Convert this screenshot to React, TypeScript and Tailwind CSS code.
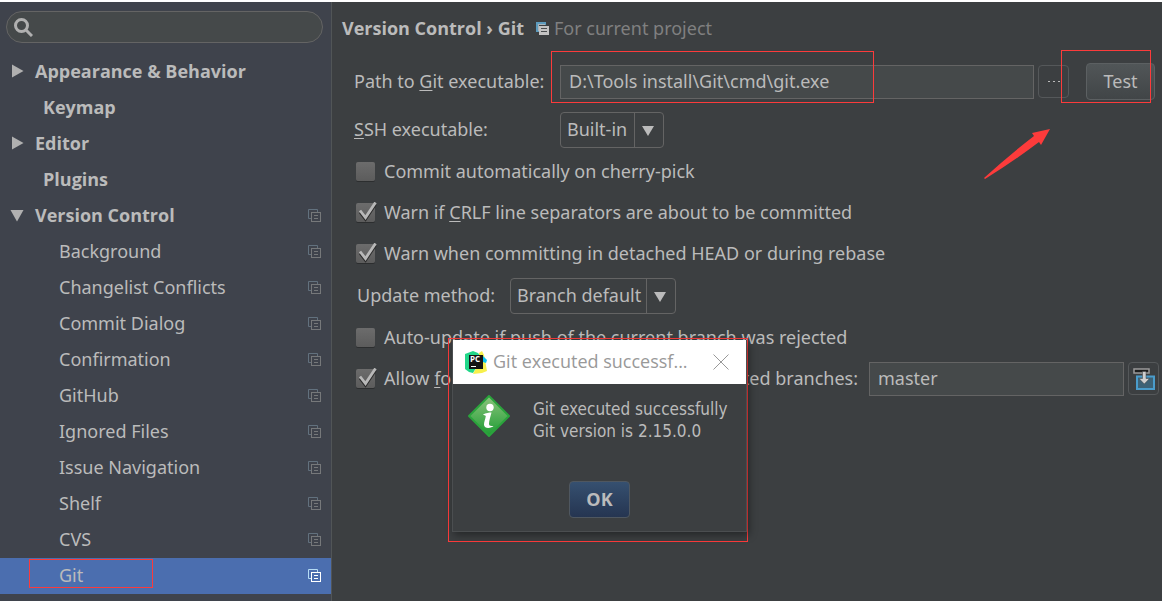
import { useState, type ReactNode } from "react";

type TreeItem = {
  label: string;
  level: "root" | "leafRoot" | "child";
  state?: "open" | "closed";
  project?: boolean;
};

const ITEMS: TreeItem[] = [
  { label: "Appearance & Behavior", level: "root", state: "closed" },
  { label: "Keymap", level: "leafRoot" },
  { label: "Editor", level: "root", state: "closed" },
  { label: "Plugins", level: "leafRoot" },
  { label: "Version Control", level: "root", state: "open", project: true },
  { label: "Background", level: "child", project: true },
  { label: "Changelist Conflicts", level: "child", project: true },
  { label: "Commit Dialog", level: "child", project: true },
  { label: "Confirmation", level: "child", project: true },
  { label: "GitHub", level: "child", project: true },
  { label: "Ignored Files", level: "child", project: true },
  { label: "Issue Navigation", level: "child", project: true },
  { label: "Shelf", level: "child", project: true },
  { label: "CVS", level: "child", project: true },
  { label: "Git", level: "child", project: true },
];

const INDENT = {
  root: "pl-[35px] font-['Open_Sans',sans-serif] font-bold",
  leafRoot: "pl-[43px] font-['Open_Sans',sans-serif] font-bold",
  child: "pl-[59px]",
};

function ProjectIcon({ active }: { active: boolean }) {
  const back = active ? "#b5dcf5" : "#62717e";
  const front = active ? "#ffffff" : "#76787a";
  return (
    <svg width="13" height="13" viewBox="0 0 13 13" fill="none" className="shrink-0" aria-hidden="true">
      <path d="M3 9.5H.5V.5h9V3" stroke={back} />
      <rect x="3.5" y="3.5" width="9" height="9" stroke={front} />
      <path d="M6 6.5h4M6 9.5h4" stroke={front} />
    </svg>
  );
}

function TreeRow({ item, active, onSelect }: { item: TreeItem; active: boolean; onSelect: () => void }) {
  return (
    <li className="relative">
      <button
        onClick={onSelect}
        className={`flex h-9 w-full items-center pb-0.5 pr-[10px] text-left ${INDENT[item.level]} ${active ? "bg-[#4b6eaf]" : ""}`}
      >
        <span className="flex-1">{item.label}</span>
        {item.project && <ProjectIcon active={active} />}
      </button>
      {item.state && (
        <svg width="14" height="14" viewBox="0 0 14 14" className="absolute left-[10px] top-[10px]" aria-hidden="true">
          <path d={item.state === "open" ? "M0.500 2h13L7 13.500z" : "M2 .5v13L13.500 7z"} fill="#b0b0b0" />
        </svg>
      )}
      {active && <span className="pointer-events-none absolute left-[29px] top-px h-[29px] w-[124px] border border-[#fc3b3b]" />}
    </li>
  );
}

function Check({ id, defaultChecked, children }: { id: string; defaultChecked?: boolean; children: ReactNode }) {
  return (
    <div className="flex h-[41px] items-center gap-[9px]">
      <span className="relative h-[19px] w-[19px] shrink-0">
        <input
          id={id}
          type="checkbox"
          defaultChecked={defaultChecked}
          className="peer block h-[19px] w-[19px] appearance-none rounded-[2px] bg-gradient-to-b from-[#6c6c6c] to-[#5c5c5c] shadow-[0_1px_0_#2c2e2f]"
        />
        <svg
          width="20"
          height="20"
          viewBox="0 0 20 20"
          fill="none"
          className="pointer-events-none absolute left-px -top-px hidden peer-checked:block"
          aria-hidden="true"
        >
          <path d="M3 10.500L8.500 17.500L18.500 2.500" stroke="#2b2b2b" strokeWidth="2.500" />
          <path d="M3 8.500L8.500 15.500L18.500 .5" stroke="#b8b8b8" strokeWidth="2.800" />
        </svg>
      </span>
      <label htmlFor={id} className="flex flex-1 justify-between whitespace-pre pb-0.5">
        {children}
      </label>
    </div>
  );
}

function Combo({ id, options, className }: { id: string; options: string[]; className: string }) {
  return (
    <div className={`relative h-9 rounded border border-[#646464] ${className}`}>
      <select id={id} className="h-full w-full appearance-none bg-transparent pb-0.5 pl-[6px] outline-none">
        {options.map((o) => (
          <option key={o}>{o}</option>
        ))}
      </select>
      <span className="pointer-events-none absolute inset-y-0 right-0 flex w-[29px] items-center justify-center border-l border-[#646464]">
        <svg width="12" height="11" viewBox="0 0 12 11" className="-ml-0.5" aria-hidden="true">
          <path d="M0 1h12L6 11z" fill="#bbbbbb" />
        </svg>
      </span>
    </div>
  );
}

function SuccessDialog({ onClose }: { onClose: () => void }) {
  return (
    <div className="absolute left-[116px] top-[336px] border border-[#fc3b3b] pb-[9px] pl-[3px] pt-px">
      <div
        role="dialog"
        aria-labelledby="dialog-title"
        className="w-[295px] border border-t-0 border-[#4b4e50] bg-[#3c3f41] shadow-[2px_3px_8px_rgba(0,0,0,0.4)]"
      >
        <div className="flex h-11 items-center bg-white pl-3 pr-[17px] text-[#999999]">
          <svg width="23" height="23" viewBox="0 0 23 23" className="shrink-0" aria-hidden="true">
            <path d="M14 2l3-2 2 4 1 5 2 11-5 2-9 1 3-6z" fill="#f7f04c" />
            <path d="M0 3L8 0l5 2 3 4-5 11-3 5-4-1-4-3z" fill="#21d789" />
            <path d="M18 5l4 4-1 3-3-1z" fill="#07c3f2" />
            <rect x="4" y="4" width="14" height="14" fill="#141414" />
            <text x="5" y="11" fontSize="8" fontWeight="bold" fill="#fff" fontFamily="Open Sans, sans-serif">
              PC
            </text>
            <path d="M6 15.500h5" stroke="#fff" />
          </svg>
          <h2 id="dialog-title" className="ml-[5px] flex-1 whitespace-nowrap pb-0.5 font-['Open_Sans',sans-serif]">
            Git executed successf...
          </h2>
          <button onClick={onClose} aria-label="Close">
            <svg width="16" height="16" viewBox="0 0 16 16" stroke="#999999" aria-hidden="true">
              <path d="M.5.5l15 15M15.500.5l-15 15" />
            </svg>
          </button>
        </div>
        <div className="flex gap-[23px] pl-[15px] pt-[11px]">
          <svg width="42" height="42" viewBox="0 0 42 42" className="shrink-0" aria-hidden="true">
            <defs>
              <linearGradient id="info" x1="0" y1="0" x2="0" y2="1">
                <stop offset="0" stopColor="#8cc47c" />
                <stop offset="1" stopColor="#1d9c33" />
              </linearGradient>
            </defs>
            <path d="M21 1L41 21 21 41 1 21z" fill="url(#info)" stroke="#2aa33c" strokeWidth="2" strokeLinejoin="round" />
            <circle cx="22" cy="12.500" r="3.700" fill="#fff" />
            <path d="M15 19.500c3-1.500 6-2 8.500-2-1 4-2.500 8-2.500 11.500 0 2 2 2 4.500 2-1.500 2-9 3.500-9.500-1-.2-3 1.500-6 1.800-9-.8-.7-1.800-.7-2.800-1.500z" fill="#fff" />
          </svg>
          <p className="pt-[3px] font-['DejaVu_Sans_Condensed','DejaVu_Sans',sans-serif] text-[17px] leading-[22px]">
            Git executed successfully
            <br />
            Git version is 2.15.0.0
          </p>
        </div>
        <div className="flex justify-center pb-[13px] pt-[39px]">
          <button
            onClick={onClose}
            className="h-[37px] w-[61px] rounded border border-[#4f5760] bg-gradient-to-b from-[#365070] to-[#253551] pb-0.5 font-['Open_Sans',sans-serif] font-bold"
          >
            OK
          </button>
        </div>
      </div>
    </div>
  );
}

export default function App() {
  const [selected, setSelected] = useState("Git");
  const [path, setPath] = useState("D:\\Tools install\\Git\\cmd\\git.exe");
  const [branches, setBranches] = useState("master");
  const [showResult, setShowResult] = useState(true);

  return (
    <div className="flex min-h-screen border-t-2 border-white bg-[#3c3f41] font-['Noto_Sans','Open_Sans',sans-serif] text-[18px] leading-6 text-[#bbbbbb]">
      <aside className="w-[332px] shrink-0 border-r border-[#515557] bg-[#3f434c]">
        <div className="pl-[6px] pr-2 pt-[9px]">
          <div className="flex h-8 items-center rounded-full border border-[#646464] bg-[#45494a] pl-[7px]">
            <svg width="19" height="19" viewBox="0 0 19 19" fill="none" stroke="#b0b0b0" aria-hidden="true">
              <circle cx="7.500" cy="7.500" r="6" strokeWidth="3" />
              <path d="M12 12l6 6" strokeWidth="3" />
            </svg>
            <input type="search" aria-label="Search settings" className="min-w-0 flex-1 bg-transparent px-2 outline-none" />
          </div>
        </div>
        <ul className="pt-[11px]">
          {ITEMS.map((item) => (
            <TreeRow
              key={item.label}
              item={item}
              active={selected === item.label}
              onSelect={() => setSelected(item.label)}
            />
          ))}
        </ul>
      </aside>

      <main className="relative min-w-0 flex-1">
        <header className="flex h-[61px] items-center pb-[9px] pl-[10px]">
          <h1 className="font-['Open_Sans',sans-serif] font-bold">Version Control › Git</h1>
          <svg width="13" height="13" viewBox="0 0 13 13" className="ml-3 mr-[5px]" aria-hidden="true">
            <path d="M0 0h10v3H3v7H0z" fill="#5d9bbd" />
            <path d="M2 2h7v1H3v6H2z" fill="#aab4ba" />
            <rect x="3" y="4" width="10" height="9" fill="#c3c3c3" />
            <path d="M5 6.500h6M5 9.500h6" stroke="#4a4d4f" />
          </svg>
          <span className="text-[#808080]">For current project</span>
        </header>

        <div className="relative flex items-center pl-[22px] pr-[7px]">
          <label htmlFor="git-path" className="w-[206px] shrink-0 whitespace-nowrap pb-0.5">
            Path to <u className="underline-offset-2">G</u>it executable:
          </label>
          <input
            id="git-path"
            value={path}
            onChange={(e) => setPath(e.target.value)}
            className="h-[34px] min-w-0 flex-1 border border-[#646464] bg-[#45494a] px-2 pb-0.5 outline-none"
          />
          <button
            aria-label="Browse"
            className="ml-1 flex h-[33px] w-[31px] shrink-0 items-center justify-center rounded border border-[#55585a]"
          >
            <svg width="12" height="2" viewBox="0 0 12 2" fill="#bbbbbb" aria-hidden="true">
              <path d="M0 0h2v1H0zM5 0h2v1H5zM10 0h2v1h-2z" />
            </svg>
          </button>
          <button
            onClick={() => setShowResult(true)}
            className="ml-[17px] h-[37px] w-[69px] shrink-0 rounded border border-[#5c6062] bg-gradient-to-b from-[#515658] to-[#414547] pb-0.5"
          >
            Test
          </button>
          <span className="pointer-events-none absolute -top-3 left-[219px] h-[52px] w-[323px] border border-[#fc3b3b]" />
          <span className="pointer-events-none absolute -top-[13px] right-[11px] h-[53px] w-[90px] border border-[#fc3b3b]" />
          <svg
            width="68"
            height="52"
            viewBox="0 0 68 52"
            className="pointer-events-none absolute right-[110px] top-[65px]"
            aria-hidden="true"
          >
            <path d="M66 1L57 17 55 14Q30 33 1 51L0 50Q24 28 50 8L48 5z" fill="#fc3b3b" />
          </svg>
        </div>

        <div className="mt-3 flex items-center pl-[22px]">
          <label htmlFor="ssh" className="w-[206px] shrink-0 pb-0.5">
            <u className="underline-offset-2">S</u>SH executable:
          </label>
          <Combo id="ssh" options={["Built-in", "Native"]} className="w-[104px]" />
        </div>

        <div className="pl-6 pt-[3px]">
          <Check id="cherry">Commit automatically on cherry-pick</Check>
          <Check id="crlf" defaultChecked>
            <span>
              Warn if <u className="underline-offset-2">C</u>RLF line separators are about to be committed
            </span>
          </Check>
          <Check id="detached" defaultChecked>
            Warn when committing in detached HEAD or during rebase
          </Check>
        </div>

        <div className="flex items-center pb-[3px] pl-[25px] pt-1">
          <label htmlFor="update" className="w-[153px] shrink-0 pb-0.5">
            Update method:
          </label>
          <Combo id="update" options={["Branch default", "Merge", "Rebase"]} className="w-[166px]" />
        </div>

        <div className="pl-6">
          <Check id="auto">Auto-update if push of the current branch was rejected</Check>
        </div>
        <div className="flex items-center pl-6 pr-[3px]">
          <div className="w-[502px] shrink-0">
            <Check id="force" defaultChecked>
              <span>
                Allow <u className="underline-offset-2">f</u>orce push
              </span>
              <span>protected branches:</span>
            </Check>
          </div>
          <input
            aria-label="Protected branches"
            value={branches}
            onChange={(e) => setBranches(e.target.value)}
            className="ml-[11px] h-[34px] min-w-0 flex-1 border border-[#646464] bg-[#45494a] px-2 pb-0.5 outline-none"
          />
          <button
            aria-label="Expand branches"
            className="ml-1 flex h-[33px] w-[31px] shrink-0 items-center justify-center rounded border border-[#55585a]"
          >
            <svg width="22" height="22" viewBox="0 0 22 22" aria-hidden="true">
              <rect x="1" y="1" width="15" height="4" fill="#1e1e1e" stroke="#9a9a9a" strokeWidth="1.500" />
              <rect x="4" y="8.500" width="17" height="12.500" fill="#3d6276" stroke="#4a9ccb" strokeWidth="2" />
              <path d="M9.500 3.500h3.500v7h3.500L11.300 16 6 10.500h3.500z" fill="#d0d0d0" stroke="#3c3f41" strokeWidth=".5" />
            </svg>
          </button>
        </div>

        {showResult && <SuccessDialog onClose={() => setShowResult(false)} />}
      </main>
    </div>
  );
}
